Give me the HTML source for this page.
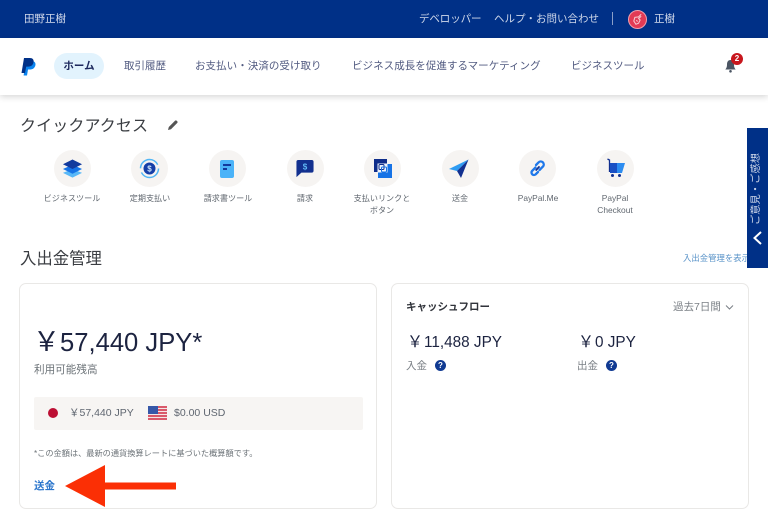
<!DOCTYPE html>
<html lang="ja">
<head>
<meta charset="utf-8">
<style>
html,body{margin:0;padding:0;background:#fff}
body{width:768px;height:512px;overflow:hidden;position:relative;font-family:"Liberation Sans","Noto Sans CJK JP",sans-serif;color:#2c2e2f}
#w{position:absolute;left:0;top:0;width:768px;height:512px;filter:blur(.35px)}
.a{position:absolute;white-space:nowrap;line-height:1}
.t{transform:translateX(-50%);text-align:center}
.c{position:absolute;width:37px;height:37px;border-radius:50%;background:#f6f4f2}
.ql{position:absolute;font-size:8.1px;color:#60676f;text-align:center;transform:translateX(-50%);line-height:12px;white-space:nowrap}
.nav{color:#515a80;font-size:10.5px;top:61px}
svg{position:absolute;overflow:visible}
.card{position:absolute;background:#fff;border:1px solid #e9e8e6;border-radius:7px;box-sizing:border-box}
</style>
</head>
<body>
<div id="w">
<div style="position:absolute;left:0;top:0;width:768px;height:38px;background:#003087"></div>
<div class="a" style="left:24px;top:14px;font-size:10.5px;color:#d5dcec">田野正樹</div>
<div class="a" style="left:419px;top:14px;font-size:10.5px;letter-spacing:-.1px;color:#cfd8ea">デベロッパー</div>
<div class="a" style="left:494px;top:14px;font-size:10.5px;color:#cfd8ea">ヘルプ・お問い合わせ</div>
<div style="position:absolute;left:612px;top:12px;width:1px;height:13px;background:#8b9fc8"></div>
<div style="position:absolute;left:628px;top:10px;width:19px;height:19px;border-radius:50%;background:#e23a55;border:.5px solid #f2a0ae;box-sizing:border-box"></div>
<svg style="left:628px;top:10px" width="19" height="19" viewBox="0 0 18 18"><path d="M12.500 4 10 6.500 6.500 7 5.500 10.500l2 3 2.500-1 1.500-3L10 8l2.500-2M8 9.500l1 1.500" fill="none" stroke="#f7c9d0" stroke-width="1"/></svg>
<div class="a" style="left:654px;top:14px;font-size:10.5px;color:#d5dcec">正樹</div>

<div style="position:absolute;left:0;top:38px;width:768px;height:57px;background:#fff;box-shadow:0 2px 6px rgba(0,0,0,.16)"></div>
<svg style="left:21px;top:57px" width="16" height="19" viewBox="0 0 16 19">
<path d="M5 4h5.500c2.800 0 4.500 1.600 3.900 4.300-.6 2.700-2.600 4.200-5 4.200H7L6 18.500H2.600z" fill="#0a84ef"/>
<path d="M3 1h5.800c2.800 0 4.300 1.500 3.700 4.300C12 8.200 10 9.600 7.300 9.600H5.200L4 16H.5z" fill="#003087"/>
</svg>
<div style="position:absolute;left:54px;top:53px;width:50px;height:26px;border-radius:13px;background:#e2f3fd"></div>
<div class="a t" style="left:79px;top:61px;font-size:10.5px;font-weight:700;color:#1e2a5e">ホーム</div>
<div class="a nav" style="left:124px">取引履歴</div>
<div class="a nav" style="left:195px;letter-spacing:.05px">お支払い・決済の受け取り</div>
<div class="a nav" style="left:352px;letter-spacing:.05px">ビジネス成長を促進するマーケティング</div>
<div class="a nav" style="left:571px">ビジネスツール</div>
<svg style="left:724px;top:59px" width="13" height="14" viewBox="0 0 13 14"><path d="M6.500 1C4 1 3 3 3 5.500 3 8 2.500 9 1.300 10.500h10.400C10.500 9 10 8 10 5.500 10 3 9 1 6.500 1z" fill="#4b5563"/><circle cx="6.500" cy="12.300" r="1.300" fill="#4b5563"/></svg>
<div style="position:absolute;left:731px;top:53px;width:12px;height:12px;border-radius:50%;background:#c8161d;color:#fff;font-size:8px;font-weight:700;line-height:12px;text-align:center">2</div>

<div class="a" style="left:20px;top:119px;font-size:16px;letter-spacing:.12px;color:#3a3d42">クイックアクセス</div>
<svg style="left:167px;top:119px" width="12" height="12" viewBox="0 0 12 12"><path d="M1 11 1.800 8 8 1.800a1.200 1.200 0 0 1 1.700 0l.5.500a1.200 1.200 0 0 1 0 1.700L4 10.200z" fill="#555"/></svg>

<div class="c" style="left:54px;top:150px"></div>
<svg style="left:62px;top:159px" width="21" height="20" viewBox="0 0 22 20"><path d="M11 10 21 14 11 19 1 14z" fill="#59b8f7"/><path d="M11 5.500 21 10 11 15 1 10z" fill="#1673e6"/><path d="M11 0 21 5 11 10 1 5z" fill="#123a9e"/></svg>
<div class="c" style="left:131px;top:150px"></div>
<svg style="left:139px;top:158px" width="21" height="21" viewBox="0 0 21 21"><circle cx="10.500" cy="10.500" r="9" fill="none" stroke="#52b6f5" stroke-width="1.500" stroke-dasharray="24 4.300"/><circle cx="10.500" cy="10.500" r="6" fill="#153fa8"/><text x="10.500" y="13.500" font-size="8" font-weight="700" fill="#cfe6fb" text-anchor="middle" font-family="Liberation Sans">$</text></svg>
<div class="c" style="left:209px;top:150px"></div>
<div style="position:absolute;left:220px;top:160px;width:14px;height:18px;border-radius:2px;background:#4bb3f8"></div>
<div style="position:absolute;left:223px;top:164px;width:8px;height:1.500px;background:#123a9e"></div>
<div style="position:absolute;left:223px;top:168px;width:4px;height:1.500px;background:#123a9e"></div>
<div class="c" style="left:287px;top:150px"></div>
<svg style="left:295px;top:160px" width="20" height="18" viewBox="0 0 20 20"><path d="M2.500 0h15A2 2 0 0 1 19.500 2v10a2 2 0 0 1-2 2H6L.5 19V2a2 2 0 0 1 2-2z" fill="#12308f"/><text x="10" y="10.500" font-size="9" font-weight="700" fill="#5fb8f5" text-anchor="middle" font-family="Liberation Sans">$</text></svg>
<div class="c" style="left:364px;top:150px"></div>
<svg style="left:373px;top:159px" width="20" height="20" viewBox="0 0 20 20"><rect x="1" y="0" width="13" height="13" fill="#0f2d8a"/><rect x="5" y="5" width="14" height="14" fill="#1673e6"/><rect x="4.500" y="4.500" width="10" height="9" fill="#eef3fb"/><rect x="6" y="5.500" width="5" height="5" rx="1" fill="none" stroke="#0f2d8a"/><rect x="8.500" y="8" width="5" height="5" rx="1" fill="none" stroke="#1673e6"/></svg>
<div class="c" style="left:442px;top:150px"></div>
<svg style="left:449px;top:159px" width="20" height="20" viewBox="0 0 20 20"><path d="M19.500.5 0 10l8 2z" fill="#2f9cf2"/><path d="M19.500.5 8 12l4 7z" fill="#12308f"/></svg>
<div class="c" style="left:519px;top:150px"></div>
<svg style="left:528px;top:159px" width="19" height="19" viewBox="0 0 19 19"><path d="M8.500 8.500 5 12a2.500 2.500 0 0 0 3.500 3.500L11 13" transform="translate(-1 0)" fill="none" stroke="#1f78ea" stroke-width="2.300" stroke-linecap="round"/><path d="M8 6l2.500-2.500A2.500 2.500 0 0 1 15 7.500L11.500 11" fill="none" stroke="#1f78ea" stroke-width="2.300" stroke-linecap="round"/><path d="M8.200 11 11 8" stroke="#12308f" stroke-width="1.800" stroke-linecap="round"/></svg>
<div class="c" style="left:597px;top:150px"></div>
<svg style="left:606px;top:158px" width="20" height="20" viewBox="0 0 20 20"><path d="M1.500 1 3.500 2v12" fill="none" stroke="#12308f" stroke-width="1.300"/><path d="M4 5h15l-3 10H4z" fill="#2c8cf0"/><path d="M4 5h7v10H4z" fill="#1a50c4"/><circle cx="6.500" cy="17.500" r="1.500" fill="#12308f"/><circle cx="13.500" cy="17.500" r="1.500" fill="#12308f"/></svg>

<div class="ql" style="left:72px;top:192px;top:193px">ビジネスツール</div>
<div class="ql" style="left:150px;top:193px">定期支払い</div>
<div class="ql" style="left:228px;top:193px">請求書ツール</div>
<div class="ql" style="left:305px;top:193px">請求</div>
<div class="ql" style="left:382px;top:193px;line-height:11.5px">支払いリンクと<br>ボタン</div>
<div class="ql" style="left:460px;top:193px">送金</div>
<div class="ql" style="left:538px;top:192px;font-size:8.4px">PayPal.Me</div>
<div class="ql" style="left:615px;top:192px;font-size:8.4px">PayPal<br>Checkout</div>

<div class="a" style="left:20px;top:251px;font-size:16.4px;color:#3a3d42">入出金管理</div>
<div class="a" style="left:683px;top:254px;font-size:8.4px;color:#5b94c9">入出金管理を表示</div>

<div style="position:absolute;left:747px;top:128px;width:21px;height:140px;background:#003087"></div>
<div class="a" style="left:757px;top:189px;font-size:10.3px;color:#cfd8ea;transform:translate(-50%,-50%) rotate(-90deg)">ご意見・ご感想</div>
<svg style="left:752px;top:231px" width="11" height="14" viewBox="0 0 11 14"><path d="M9 1 2.500 7 9 13" fill="none" stroke="#fff" stroke-width="2"/></svg>

<div class="card" style="left:19px;top:283px;width:358px;height:226px"></div>
<div class="a" style="left:33px;top:329px;font-size:25.6px;color:#1c2340"><span style="font-size:27px">￥</span>57,440 JPY*</div>
<div class="a" style="left:34px;top:365px;font-size:10.6px;color:#6c7378">利用可能残高</div>
<div style="position:absolute;left:34px;top:397px;width:329px;height:33px;background:#f7f5f3;border-radius:2px"></div>
<div style="position:absolute;left:48px;top:408px;width:10px;height:10px;border-radius:50%;background:#bc0f33"></div>
<div class="a" style="left:69px;top:408px;font-size:10.5px;color:#5f6670">￥57,440 JPY</div>
<svg style="left:148px;top:406px" width="19" height="15" viewBox="0 0 19 15"><rect width="19" height="14" fill="#d9596a"/><g fill="#f4e6e6"><rect y="2" width="19" height="1"/><rect y="5" width="19" height="1"/><rect y="8" width="19" height="1"/><rect y="11" width="19" height="1"/></g><rect width="10" height="8" fill="#3657a8"/></svg>
<div class="a" style="left:174px;top:408px;font-size:10.5px;color:#5f6670">$0.00 USD</div>
<div class="a" style="left:34px;top:450px;font-size:8.2px;color:#6c7378">*この金額は、最新の通貨換算レートに基づいた概算額です。</div>
<div class="a" style="left:34px;top:481px;font-size:10.5px;font-weight:700;color:#2a75cc">送金</div>
<svg style="left:64px;top:465px" width="112" height="42" viewBox="0 0 112 42"><path d="M1 21 41 0v17.500h71v7H41V42z" fill="#fb2f05"/></svg>

<div class="card" style="left:391px;top:283px;width:358px;height:226px"></div>
<div class="a" style="left:406px;top:302px;font-size:10.5px;font-weight:700;color:#30333a">キャッシュフロー</div>
<div class="a" style="left:673px;top:302px;font-size:10.5px;color:#7a7f85">過去7日間</div>
<svg style="left:725px;top:304px" width="9" height="7" viewBox="0 0 9 7"><path d="M1 1.500 4.500 5 8 1.500" fill="none" stroke="#7a7f85"/></svg>
<div class="a" style="left:407px;top:335px;font-size:15.3px;color:#1c2340"><span style="font-size:16px;margin-right:1px">￥</span>11,488 JPY</div>
<div class="a" style="left:578px;top:335px;font-size:15.3px;color:#1c2340"><span style="font-size:16px;margin-right:1px">￥</span>0 JPY</div>
<div class="a" style="left:406px;top:361px;font-size:10.5px;color:#7a7f85">入金</div>
<div class="a" style="left:577px;top:361px;font-size:10.5px;color:#7a7f85">出金</div>
<div style="position:absolute;left:435px;top:360px;width:11px;height:11px;border-radius:50%;background:#103a92;color:#fff;font-size:8px;font-weight:700;line-height:11px;text-align:center">?</div>
<div style="position:absolute;left:606px;top:360px;width:11px;height:11px;border-radius:50%;background:#103a92;color:#fff;font-size:8px;font-weight:700;line-height:11px;text-align:center">?</div>
</div>
</body>
</html>
